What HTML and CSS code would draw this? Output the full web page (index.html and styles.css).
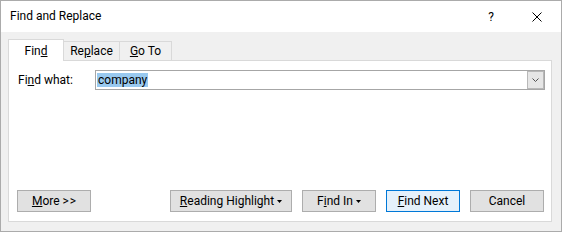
FILE: index.html
```html
<!DOCTYPE html>
<html lang="en">
<head>
<meta charset="utf-8">
<title>Find and Replace</title>
<link rel="stylesheet" href="styles.css">
</head>
<body>
<div class="window">
  <div class="titlebar">
    <span class="title">Find and Replace</span>
    <div class="caption">
      <span class="cap-btn help">?</span>
      <span class="cap-btn close"><svg width="10" height="10" viewBox="0 0 10 10"><path d="M0.5 0.5L9.5 9.5M9.5 0.5L0.5 9.5" stroke="#000" stroke-width="1" fill="none"/></svg></span>
    </div>
  </div>
  <div class="content">
    <div class="tabs">
      <div class="tab tab-find active">Fin<u>d</u></div>
      <div class="tab tab-replace">Re<u>p</u>lace</div>
      <div class="tab tab-goto"><u>G</u>o To</div>
    </div>
    <div class="panel">
      <div class="find-row">
        <span class="label">Fi<u>n</u>d what:</span>
        <div class="combo">
          <div class="field"><span class="sel">company</span></div>
          <div class="dd"><svg width="7" height="4" viewBox="0 0 7 4"><path d="M0.5 0.5L3.5 3.5L6.5 0.5" stroke="#505050" stroke-width="1" fill="none"/></svg></div>
        </div>
      </div>
      <div class="btn-row">
        <button class="btn btn-more"><u>M</u>ore <span class="chev">&gt;&gt;</span></button>
        <div class="btn-group">
          <button class="btn btn-wide"><u>R</u>eading Highlight<svg class="arrow" width="5" height="3" viewBox="0 0 5 3"><path d="M0 0H5L2.5 3Z" fill="#000"/></svg></button>
          <button class="btn">F<u>i</u>nd In<svg class="arrow" width="5" height="3" viewBox="0 0 5 3"><path d="M0 0H5L2.5 3Z" fill="#000"/></svg></button>
          <button class="btn btn-default"><u>F</u>ind Next</button>
          <button class="btn">Cancel</button>
        </div>
      </div>
    </div>
  </div>
</div>
</body>
</html>
```
FILE: styles.css
```css
html, body {
  margin: 0;
  padding: 0;
}
body {
  width: 562px;
  height: 232px;
  font-family: Roboto, "Noto Sans", sans-serif;
  font-size: 12px;
  color: #000;
  overflow: hidden;
}
.window {
  box-sizing: border-box;
  width: 562px;
  height: 232px;
  border: 1px solid #ababab;
  background: #f0f0f0;
  display: flex;
  flex-direction: column;
}
.titlebar {
  flex: none;
  height: 31px;
  background: #fff;
  display: flex;
}
.title {
  flex: 1;
  padding-left: 9px;
  line-height: 31px;
}
.caption {
  display: flex;
  padding-right: 1px;
}
.cap-btn {
  width: 46px;
  height: 31px;
  display: flex;
  align-items: center;
  justify-content: center;
}
.help {
  font-size: 12px;
  line-height: 31px;
  padding-top: 1px;
  box-sizing: border-box;
}
.close svg {
  display: block;
  margin-top: 1px;
}
.content {
  flex: 1;
  display: flex;
  flex-direction: column;
  padding: 7px 9px 9px 7px;
}
.tabs {
  display: flex;
  align-items: flex-end;
  flex: none;
}
.tab {
  box-sizing: border-box;
  border: 1px solid #d9d9d9;
  border-bottom: none;
  background: #f0f0f0;
  text-align: center;
  line-height: 17px;
  height: 19px;
  padding-top: 1px;
}
.tab-find {
  width: 56px;
}
.tab-replace {
  width: 57px;
  margin-left: -1px;
}
.tab-goto {
  width: 53px;
  margin-left: -1px;
}
.tab.active {
  position: relative;
  z-index: 1;
  background: #fff;
  height: 22px;
  padding-top: 3px;
  margin-bottom: -1px;
}
.panel {
  flex: 1;
  border: 1px solid #d9d9d9;
  background: #fff;
  display: flex;
  flex-direction: column;
  justify-content: space-between;
  padding: 9px 6px 9px 9px;
}
.find-row {
  display: flex;
  align-items: center;
  height: 20px;
}
.label {
  width: 77px;
  flex: none;
  line-height: 20px;
}
.combo {
  flex: 1;
  box-sizing: border-box;
  height: 20px;
  border: 1px solid #a6a6a6;
  display: flex;
}
.field {
  flex: 1;
  padding-left: 1px;
  line-height: 18px;
}
.sel {
  background: #99c9ef;
  padding: 0 1px;
}
.dd {
  box-sizing: border-box;
  width: 17px;
  height: 18px;
  border: 1px solid #b8b8b8;
  background: #e6e6e6;
  display: flex;
  align-items: center;
  justify-content: center;
}
.dd svg {
  display: block;
}
.btn-row {
  display: flex;
  justify-content: space-between;
  margin-left: -1px;
  margin-right: 1px;
}
.btn-group {
  display: flex;
  gap: 10px;
}
.btn {
  box-sizing: border-box;
  width: 74px;
  height: 22px;
  border: 1px solid #adadad;
  background: #e1e1e1;
  font-family: inherit;
  font-size: 12px;
  color: #000;
  line-height: 20px;
  padding: 0;
  margin: 0;
  display: flex;
  align-items: center;
  justify-content: center;
  white-space: pre;
}
.chev {
  letter-spacing: 1px;
  margin-right: -1px;
}
.btn-wide {
  width: 122px;
}
.btn-default {
  border-color: #0078d7;
  background: #e5f1fb;
}
.arrow {
  display: block;
  margin-left: 3px;
  margin-top: 1px;
}
```
